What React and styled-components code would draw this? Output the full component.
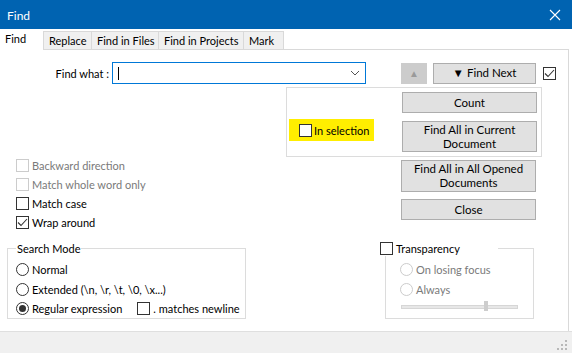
import styled, { createGlobalStyle } from "styled-components";

const GlobalStyle = createGlobalStyle`
  html, body {
    margin: 0;
    padding: 0;
    background: #ffffff;
  }
  body {
    font-family: Lato, "Liberation Sans", sans-serif;
    font-size: 11px;
    color: #000000;
  }
`;

const Check = () => (
  <svg width="11" height="11" viewBox="0 0 11 11">
    <path d="M1 5.5 L4 8.5 L10 2" fill="none" stroke="#333" strokeWidth="1.1" />
  </svg>
);

const Checkbox = ({ checked, disabled }) => (
  <Box $disabled={disabled}>{checked && <Check />}</Box>
);

const Radio = ({ checked, disabled }) => (
  <Circle $disabled={disabled}>{checked && <Dot />}</Circle>
);

const Option = ({ label, checked, disabled, radio, h }) => (
  <OptionRow $h={h} $disabled={disabled}>
    {radio ? (
      <Radio checked={checked} disabled={disabled} />
    ) : (
      <Checkbox checked={checked} disabled={disabled} />
    )}
    <span>{label}</span>
  </OptionRow>
);

const tabs = [
  { name: "Replace", w: 48 },
  { name: "Find in Files", w: 67 },
  { name: "Find in Projects", w: 85 },
  { name: "Mark", w: 41 },
];

const App = () => {
  return (
    <>
      <GlobalStyle />
      <Window>
        <TitleBar>
          <Title>Find</Title>
          <svg width="12" height="12" viewBox="0 0 12 12">
            <path d="M1 1 L11 11 M11 1 L1 11" stroke="#fff" strokeWidth="1.1" />
          </svg>
        </TitleBar>

        <TabRow>
          <ActiveTab>Find</ActiveTab>
          {tabs.map((t, i) => (
            <Tab key={t.name} $w={t.w} $last={i === tabs.length - 1}>
              {t.name}
            </Tab>
          ))}
        </TabRow>

        <Panel>
          <FindRow>
            <FieldLabel>Find what :</FieldLabel>
            <Combo>
              <Caret />
              <svg width="10" height="6" viewBox="0 0 10 6">
                <path d="M1 1 L5 5 L9 1" fill="none" stroke="#555" strokeWidth="1" />
              </svg>
            </Combo>
            <UpButton>▲</UpButton>
            <Button $w={103} $h={21} $ml={6}>▼ Find Next</Button>
            <CheckHolder>
              <Checkbox checked />
            </CheckHolder>
          </FindRow>

          <SelectionGroup>
            <SelectionLeft>
              <Highlight>
                <Checkbox />
                <span>In selection</span>
              </Highlight>
            </SelectionLeft>
            <ButtonColumn>
              <Button $w={135} $h={21}>Count</Button>
              <Button $w={135} $h={31}>
                Find All in Current
                <br />
                Document
              </Button>
            </ButtonColumn>
          </SelectionGroup>

          <MiddleRow>
            <OptionList>
              <Option label="Backward direction" disabled />
              <Option label="Match whole word only" disabled />
              <Option label="Match case" />
              <Option label="Wrap around" checked />
            </OptionList>
            <ButtonColumn $pt={3} $gap={7}>
              <Button $w={135} $h={32}>
                Find All in All Opened
                <br />
                Documents
              </Button>
              <Button $w={135} $h={21}>Close</Button>
            </ButtonColumn>
          </MiddleRow>

          <BottomRow>
            <GroupBox $ml={7} $w={239}>
              <Legend $left={8}>Search Mode</Legend>
              <GroupBody $pl={8}>
                <Option radio label="Normal" h={20} />
                <Option radio label="Extended (\n, \r, \t, \0, \x...)" h={20} />
                <OptionRow $h={19}>
                  <Radio checked />
                  <span>Regular expression</span>
                  <Inline>
                    <Checkbox />
                    <span>. matches newline</span>
                  </Inline>
                </OptionRow>
              </GroupBody>
            </GroupBox>

            <GroupBox $ml={139} $w={149}>
              <Legend $left={-7} $w={119}>
                <Checkbox />
                <span>Transparency</span>
              </Legend>
              <GroupBody $pl={14}>
                <Option radio label="On losing focus" disabled h={20} />
                <Option radio label="Always" disabled h={20} />
                <Slider>
                  <Thumb />
                </Slider>
              </GroupBody>
            </GroupBox>
          </BottomRow>
        </Panel>

        <Footer>
          <svg width="12" height="12" viewBox="0 0 12 12">
            <g fill="#b8b8b8">
              <rect x="8" y="0" width="2" height="2" />
              <rect x="4" y="4" width="2" height="2" />
              <rect x="8" y="4" width="2" height="2" />
              <rect x="0" y="8" width="2" height="2" />
              <rect x="4" y="8" width="2" height="2" />
              <rect x="8" y="8" width="2" height="2" />
            </g>
          </svg>
        </Footer>
      </Window>
    </>
  );
};

const Window = styled.div`
  width: 572px;
  height: 353px;
  display: flex;
  flex-direction: column;
  overflow: hidden;
`;

const TitleBar = styled.div`
  height: 29px;
  flex: none;
  background: #0063b1;
  display: flex;
  align-items: center;
  justify-content: space-between;
  padding: 0 11px 0 7px;
  color: #ffffff;
`;

const Title = styled.span`
  font-size: 12px;
  margin-top: 1px;
`;

const TabRow = styled.div`
  height: 20px;
  flex: none;
  display: flex;
  align-items: flex-end;
  position: relative;
  z-index: 1;
`;

const ActiveTab = styled.div`
  width: 43px;
  height: 21px;
  margin-bottom: -1px;
  box-sizing: border-box;
  padding: 3px 0 0 5px;
  background: #ffffff;
`;

const Tab = styled.div`
  width: ${(p) => p.$w}px;
  height: 18px;
  box-sizing: border-box;
  padding: 2px 0 0 5px;
  background: #f0f0f0;
  border: 1px solid #d9d9d9;
  border-bottom: none;
  border-right: ${(p) => (p.$last ? "1px solid #d9d9d9" : "none")};
  white-space: nowrap;
`;

const Panel = styled.div`
  flex: 1;
  margin-right: 3px;
  border-top: 1px solid #d9d9d9;
  border-right: 1px solid #d9d9d9;
  display: flex;
  flex-direction: column;
`;

const FindRow = styled.div`
  display: flex;
  align-items: center;
  margin-top: 12px;
  height: 22px;
`;

const FieldLabel = styled.div`
  width: 112px;
  text-align: right;
  padding-right: 3px;
  box-sizing: border-box;
`;

const Combo = styled.div`
  width: 254px;
  height: 22px;
  box-sizing: border-box;
  border: 1px solid #0078d7;
  display: flex;
  align-items: center;
  justify-content: space-between;
  padding: 0 5px 0 5px;
`;

const Caret = styled.div`
  width: 1px;
  height: 13px;
  background: #000000;
`;

const UpButton = styled.div`
  width: 26px;
  height: 21px;
  margin-left: 35px;
  background: #cccccc;
  color: #9a9a9a;
  font-size: 10px;
  display: flex;
  align-items: center;
  justify-content: center;
`;

const Button = styled.div`
  width: ${(p) => p.$w}px;
  height: ${(p) => p.$h}px;
  margin-left: ${(p) => p.$ml || 0}px;
  box-sizing: border-box;
  border: 1px solid #adadad;
  background: #e1e1e1;
  display: flex;
  align-items: center;
  justify-content: center;
  text-align: center;
  line-height: 14px;
  font-size: 11.5px;
`;

const CheckHolder = styled.div`
  margin-left: 7px;
  display: flex;
`;

const Box = styled.div`
  width: 13px;
  height: 13px;
  flex: none;
  box-sizing: border-box;
  border: 1px solid ${(p) => (p.$disabled ? "#cccccc" : "#333333")};
  background: #ffffff;
  display: flex;
  align-items: center;
  justify-content: center;
`;

const Circle = styled.div`
  width: 13px;
  height: 13px;
  flex: none;
  box-sizing: border-box;
  border-radius: 50%;
  border: 1px solid ${(p) => (p.$disabled ? "#cccccc" : "#333333")};
  background: #ffffff;
  display: flex;
  align-items: center;
  justify-content: center;
`;

const Dot = styled.div`
  width: 7px;
  height: 7px;
  border-radius: 50%;
  background: #333333;
`;

const SelectionGroup = styled.div`
  margin: 3px 0 0 286px;
  width: 256px;
  height: 70px;
  box-sizing: border-box;
  border: 1px solid #dcdcdc;
  display: flex;
  justify-content: space-between;
`;

const SelectionLeft = styled.div`
  padding: 31px 0 0 2px;
`;

const Highlight = styled.div`
  display: flex;
  align-items: center;
  gap: 2px;
  background: #ffee00;
  height: 22px;
  padding: 0 5px 0 10px;
`;

const ButtonColumn = styled.div`
  display: flex;
  flex-direction: column;
  gap: ${(p) => p.$gap || 8}px;
  padding: ${(p) => p.$pt || 4}px 4px 0 0;
`;

const MiddleRow = styled.div`
  display: grid;
  grid-template-columns: 401px 135px;
`;

const OptionList = styled.div`
  padding-left: 16px;
  margin-top: -1px;
`;

const OptionRow = styled.div`
  height: ${(p) => p.$h || 19}px;
  display: flex;
  align-items: center;
  gap: 3px;
  color: ${(p) => (p.$disabled ? "#7a7a7a" : "#000000")};
  white-space: nowrap;
`;

const Inline = styled.div`
  display: flex;
  align-items: center;
  gap: 3px;
  margin-left: 12px;
`;

const BottomRow = styled.div`
  display: flex;
  margin-top: 16px;
`;

const GroupBox = styled.div`
  position: relative;
  margin-left: ${(p) => p.$ml}px;
  width: ${(p) => p.$w}px;
  height: 71px;
  box-sizing: border-box;
  border: 1px solid #dcdcdc;
`;

const Legend = styled.div`
  position: absolute;
  top: -8px;
  left: ${(p) => p.$left}px;
  ${(p) => (p.$w ? `width: ${p.$w}px;` : "")}
  height: 15px;
  box-sizing: border-box;
  padding: 0 1px;
  background: #ffffff;
  display: flex;
  align-items: center;
  gap: 3px;
  white-space: nowrap;
`;

const GroupBody = styled.div`
  padding: 10px 0 0 ${(p) => p.$pl}px;
`;

const Slider = styled.div`
  position: relative;
  width: 117px;
  height: 4px;
  margin: 6px 0 0 1px;
  box-sizing: border-box;
  background: #e7e7e7;
  border: 1px solid #d6d6d6;
`;

const Thumb = styled.div`
  position: absolute;
  left: 82px;
  top: -5px;
  width: 4px;
  height: 10px;
  background: #cdcdcd;
`;

const Footer = styled.div`
  height: 22px;
  flex: none;
  box-sizing: border-box;
  border-top: 1px solid #dfdfdf;
  background: #f0f0f0;
  display: flex;
  align-items: flex-end;
  justify-content: flex-end;
  padding: 0 3px 1px 0;
`;

export default App;
